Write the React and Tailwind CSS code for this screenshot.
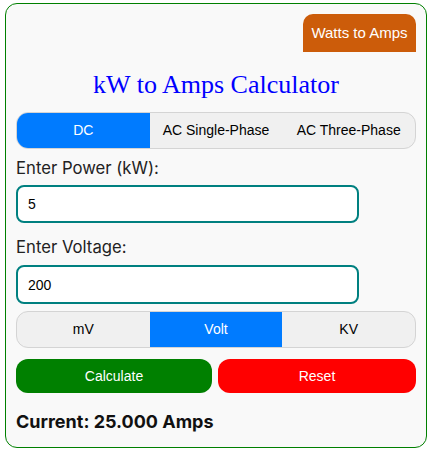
import React, { useState } from "react";

export default function App() {
  const [mode, setMode] = useState("DC");
  const [unit, setUnit] = useState("Volt");
  const [power, setPower] = useState("5");
  const [voltage, setVoltage] = useState("200");
  const modes = ["DC", "AC Single-Phase", "AC Three-Phase"];
  const units = ["mV", "Volt", "KV"];
  return (
    <div className="min-h-[454px] bg-white pt-[3px] pl-[5px]">
      <div className="w-[422px] h-[445px] border border-[#008000] rounded-[12px] bg-[#f9f9f9] px-[10px] pt-[10px] flex flex-col font-['Inter','Noto_Sans',sans-serif]">
        <div className="flex justify-end">
          <button className="w-[113px] h-[38px] bg-[#cc5c0a] text-white text-[15px] rounded-t-[10px] font-['Liberation_Sans',Arial,sans-serif]">
            Watts to Amps
          </button>
        </div>
        <h1 className="text-center text-[#0000ff] text-[26px] leading-none mt-[20px] mb-[14px] font-['Liberation_Serif','Times_New_Roman',serif]">
          kW to Amps Calculator
        </h1>
        <div className="flex h-[37px] border border-[#d4d4d4] rounded-[12px] bg-[#f0f0f0] overflow-hidden">
          {modes.map((m) => (
            <button
              key={m}
              onClick={() => setMode(m)}
              className={
                mode === m
                  ? "flex-1 text-[14px] bg-[#007bff] text-white font-['Liberation_Sans',Arial,sans-serif]"
                  : "flex-1 text-[14px] text-black font-['Liberation_Sans',Arial,sans-serif]"
              }
            >
              {m}
            </button>
          ))}
        </div>
        <label className="block text-[16.7px] text-[#222] mt-[9px] leading-[20px]">Enter Power (kW):</label>
        <input
          value={power}
          onChange={(e) => setPower(e.target.value)}
          className="mt-[7px] w-[343px] h-[38px] border-2 border-[#008080] rounded-[8px] bg-white px-[10px] text-[14px] text-black outline-none font-['Liberation_Sans',Arial,sans-serif]"
        />
        <label className="block text-[16.7px] text-[#222] mt-[14px] leading-[20px]">Enter Voltage:</label>
        <input
          value={voltage}
          onChange={(e) => setVoltage(e.target.value)}
          className="mt-[8px] w-[343px] h-[39px] border-2 border-[#008080] rounded-[8px] bg-white px-[10px] text-[14px] text-black outline-none font-['Liberation_Sans',Arial,sans-serif]"
        />
        <div className="flex h-[37px] mt-[7px] border border-[#d4d4d4] rounded-[12px] bg-[#f0f0f0] overflow-hidden">
          {units.map((u) => (
            <button
              key={u}
              onClick={() => setUnit(u)}
              className={
                unit === u
                  ? "flex-1 text-[14px] bg-[#007bff] text-white font-['Liberation_Sans',Arial,sans-serif]"
                  : "flex-1 text-[14px] text-black font-['Liberation_Sans',Arial,sans-serif]"
              }
            >
              {u}
            </button>
          ))}
        </div>
        <div className="flex justify-between mt-[11px]">
          <button className="w-[196px] h-[34px] rounded-[12px] bg-[#008000] text-white text-[14px] font-['Liberation_Sans',Arial,sans-serif]">Calculate</button>
          <button className="w-[198px] h-[34px] rounded-[12px] bg-[#ff0000] text-white text-[14px] font-['Liberation_Sans',Arial,sans-serif]">Reset</button>
        </div>
        <div className="mt-[18px] text-[18px] font-bold text-[#111] leading-[22px]">Current: 25.000 Amps</div>
      </div>
    </div>
  );
}
